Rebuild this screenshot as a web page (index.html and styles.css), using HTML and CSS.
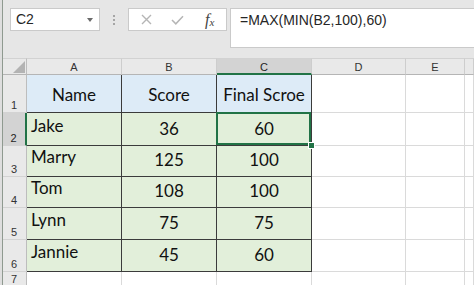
FILE: index.html
```html
<!DOCTYPE html>
<html>
<head>
<meta charset="utf-8">
<link rel="stylesheet" href="styles.css">
</head>
<body>
<div class="app">
  <div class="win">
    <div class="toolbar">
      <div class="namebox"><span class="ref">C2</span><span class="caret"></span></div>
      <div class="grip"><i></i><i></i><i></i></div>
      <div class="fbtns">
        <span class="btn bx"><svg width="11" height="11" viewBox="0 0 11 11"><path d="M1 1 L10 10 M10 1 L1 10" stroke="#b5b5b5" stroke-width="1.4" fill="none"/></svg></span>
        <span class="btn bok"><svg width="13" height="10" viewBox="0 0 13 10"><path d="M1 5 L4.8 8.8 L12 1.2" stroke="#b5b5b5" stroke-width="1.5" fill="none"/></svg></span>
        <span class="btn bfx"><i>f</i><span class="sx">x</span></span>
      </div>
      <div class="formula">=MAX(MIN(B2,100),60)</div>
    </div>
    <div class="sheet">
      <div class="corner"><svg width="12" height="12" viewBox="0 0 12 12"><polygon points="12,0 12,12 0,12" fill="#b3b3b3"/></svg></div>
      <div class="hd">A</div>
      <div class="hd">B</div>
      <div class="hd sel">C</div>
      <div class="hd">D</div>
      <div class="hd">E</div>
      <div class="hd"></div>

      <div class="rh">1</div>
      <div class="c t bl ctr top">Name</div>
      <div class="c t bl ctr top">Score</div>
      <div class="c t bl ctr top">Final Scroe</div>
      <div class="c"></div>
      <div class="c"></div>
      <div class="c"></div>

      <div class="rh rsel">2</div>
      <div class="c t gr nm">Jake</div>
      <div class="c t gr ctr">36</div>
      <div class="c t gr ctr act">60<span class="frame"></span><span class="handle"></span></div>
      <div class="c"></div>
      <div class="c"></div>
      <div class="c"></div>

      <div class="rh">3</div>
      <div class="c t gr nm">Marry</div>
      <div class="c t gr ctr">125</div>
      <div class="c t gr ctr">100</div>
      <div class="c"></div>
      <div class="c"></div>
      <div class="c"></div>

      <div class="rh">4</div>
      <div class="c t gr nm">Tom</div>
      <div class="c t gr ctr">108</div>
      <div class="c t gr ctr">100</div>
      <div class="c"></div>
      <div class="c"></div>
      <div class="c"></div>

      <div class="rh">5</div>
      <div class="c t gr nm">Lynn</div>
      <div class="c t gr ctr">75</div>
      <div class="c t gr ctr">75</div>
      <div class="c"></div>
      <div class="c"></div>
      <div class="c"></div>

      <div class="rh">6</div>
      <div class="c t gr nm">Jannie</div>
      <div class="c t gr ctr">45</div>
      <div class="c t gr ctr">60</div>
      <div class="c"></div>
      <div class="c"></div>
      <div class="c"></div>

      <div class="rh r7">7</div>
      <div class="c"></div>
      <div class="c"></div>
      <div class="c"></div>
      <div class="c"></div>
      <div class="c"></div>
      <div class="c"></div>
    </div>
  </div>
</div>
</body>
</html>
```
FILE: styles.css
```css
* { box-sizing: border-box; }
html, body { margin: 0; padding: 0; }
body { width: 474px; height: 285px; overflow: hidden; background: #dedede; }

.app {
  width: 474px;
  height: 285px;
  padding-left: 2px;
  background: #dedede;
  overflow: hidden;
}
.win {
  height: 100%;
  border-left: 1px solid #8f9a90;
  background: #e6e6e6;
  overflow: hidden;
}

/* toolbar */
.toolbar {
  height: 58px;
  display: flex;
  align-items: flex-start;
  padding: 8px 0 0 7px;
  overflow: hidden;
  font-family: "Liberation Sans", Arial, sans-serif;
}
.namebox {
  width: 90px;
  height: 23px;
  background: #fff;
  border: 1px solid #cacaca;
  display: flex;
  align-items: center;
  padding: 0 6px 0 5px;
  flex: none;
}
.ref { font-size: 14px; line-height: 21px; color: #262626; }
.caret {
  margin-left: auto;
  width: 0; height: 0;
  border-left: 3.5px solid transparent;
  border-right: 3.5px solid transparent;
  border-top: 4px solid #6a6a6a;
}
.grip {
  flex: none;
  width: 28px;
  height: 23px;
  display: flex;
  flex-direction: column;
  align-items: center;
  justify-content: center;
  gap: 2px;
}
.grip i { display: block; width: 2px; height: 2px; background: #a5a5a5; }
.fbtns {
  flex: none;
  width: 99px;
  height: 23px;
  background: #fff;
  border: 1px solid #cacaca;
  display: flex;
  align-items: center;
  padding-left: 12px;
}
.btn { display: flex; align-items: center; justify-content: center; }
.bx { width: 11px; }
.bok { width: 13px; margin-left: 19px; }
.bfx { margin-left: 21px; font-family: "Liberation Serif", "Times New Roman", serif; color: #444; }
.bfx i { font-size: 16px; font-style: italic; }
.bfx .sx { font-size: 11px; font-style: italic; margin-top: 5px; margin-left: 0px; }
.formula {
  flex: none;
  margin-left: 3px;
  width: 270px;
  height: 40px;
  background: #fff;
  border: 1px solid #cacaca;
  padding: 1px 0 0 9px;
  font-size: 14px;
  line-height: 21px;
  color: #262626;
  white-space: nowrap;
}

/* sheet */
.sheet {
  display: grid;
  grid-template-columns: 24px 95px 95px 95px 94px 59px 1fr;
  grid-template-rows: 17px 38px 33px 31px 31px 32px 32px 20px;
  background: #fff;
}
.corner {
  background: #e9e9e9;
  border-right: 1px solid #bdbdbd;
  border-bottom: 1px solid #b5b5b5;
  border-top: 1px solid #d2d2d2;
  display: flex;
  align-items: flex-end;
  justify-content: flex-end;
  padding: 0 1px 1px 0;
}
.hd {
  background: #e9e9e9;
  border-right: 1px solid #cdcdcd;
  border-bottom: 1px solid #b5b5b5;
  border-top: 1px solid #d2d2d2;
  font-family: "Liberation Sans", Arial, sans-serif;
  font-size: 11px;
  line-height: 13px;
  color: #333;
  text-align: center;
  padding-top: 2px;
}
.hd.sel {
  background: #d3d3d3;
  border-bottom: 2px solid #217346;
  color: #1f1f1f;
}
.rh {
  background: #e9e9e9;
  border-right: 1px solid #bdbdbd;
  border-bottom: 1px solid #d3d3d3;
  font-family: "Liberation Sans", Arial, sans-serif;
  font-size: 11px;
  line-height: 13px;
  color: #333;
  display: flex;
  align-items: flex-end;
  justify-content: center;
  padding-right: 1px;
}
.rh.rsel {
  background: #d3d3d3;
  border-right: 2px solid #217346;
  color: #1f1f1f;
}
.rh.r7 { align-items: flex-start; padding-top: 1px; }

.c {
  border-right: 1px solid #dadada;
  border-bottom: 1px solid #dadada;
  font-family: Lato, "Open Sans", sans-serif;
  font-size: 17px;
  line-height: 20px;
  color: #111;
  display: flex;
  align-items: flex-end;
}
.c.t { border-right-color: #3b3b3b; border-bottom-color: #3b3b3b; }
.c.bl { background: #ddebf7; }
.c.gr { background: #e2efda; }
.c.ctr { justify-content: center; padding-bottom: 6px; }
.c.top { padding-bottom: 7px; }
.c.nm { padding-left: 4px; padding-bottom: 9px; }

.act { position: relative; }
.frame {
  position: absolute;
  left: -1px; top: -1px; right: 0; bottom: 0;
  border: 2px solid #217346;
}
.handle {
  position: absolute;
  right: -4px; bottom: -4px;
  width: 7px; height: 7px;
  background: #217346;
  border: 1px solid #fff;
}
```
